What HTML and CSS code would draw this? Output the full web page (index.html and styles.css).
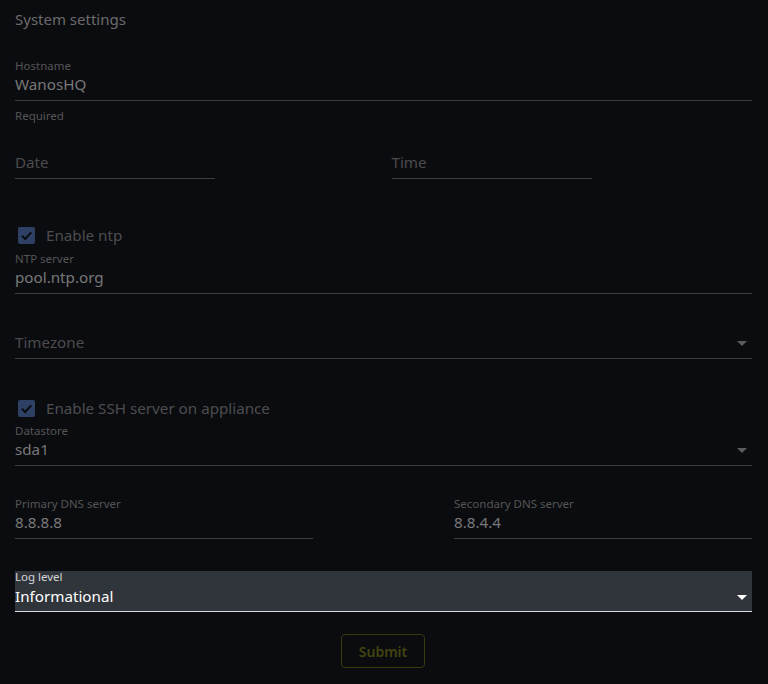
FILE: index.html
```html
<!DOCTYPE html>
<html lang="en">
<head>
<meta charset="utf-8">
<title>System settings</title>
<link rel="stylesheet" href="styles.css">
</head>
<body>
<main class="page">
  <h1 class="title">System settings</h1>

  <div class="field hostname">
    <span class="label">Hostname</span>
    <span class="value">WanosHQ</span>
  </div>
  <div class="helper">Required</div>

  <div class="row-half">
    <div class="field narrow">
      <span class="label"></span>
      <span class="value placeholder">Date</span>
    </div>
    <div class="field narrow">
      <span class="label"></span>
      <span class="value placeholder">Time</span>
    </div>
  </div>

  <label class="check check-ntp">
    <span class="box"><svg viewBox="0 0 17 17" width="17" height="17"><path d="M4 8.8 L7.2 12 L13.2 5.4" fill="none" stroke="#0b0c10" stroke-width="2"/></svg></span>
    <span class="check-text">Enable ntp</span>
  </label>

  <div class="field ntp">
    <span class="label">NTP server</span>
    <span class="value">pool.ntp.org</span>
  </div>

  <div class="field select timezone">
    <span class="label"></span>
    <span class="value placeholder">Timezone</span>
    <span class="arrow"></span>
  </div>

  <label class="check check-ssh">
    <span class="box"><svg viewBox="0 0 17 17" width="17" height="17"><path d="M4 8.8 L7.2 12 L13.2 5.4" fill="none" stroke="#0b0c10" stroke-width="2"/></svg></span>
    <span class="check-text">Enable SSH server on appliance</span>
  </label>

  <div class="field select datastore">
    <span class="label">Datastore</span>
    <span class="value">sda1</span>
    <span class="arrow"></span>
  </div>

  <div class="row-dns">
    <div class="field dns">
      <span class="label">Primary DNS server</span>
      <span class="value">8.8.8.8</span>
    </div>
    <div class="field dns">
      <span class="label">Secondary DNS server</span>
      <span class="value">8.8.4.4</span>
    </div>
  </div>

  <div class="field select filled">
    <span class="label">Log level</span>
    <span class="value">Informational</span>
    <span class="arrow"></span>
  </div>

  <div class="actions">
    <button class="submit" type="button">Submit</button>
  </div>
</main>
</body>
</html>
```

FILE: styles.css
```css
* { box-sizing: border-box; }
html, body {
  margin: 0;
  background: #0b0c10;
  height: 100%;
}
body {
  font-family: "Noto Sans", "Open Sans", sans-serif;
  color: #777;
}
.page {
  padding: 9px 16px 0 15px;
  display: flex;
  flex-direction: column;
}
.title {
  margin: 0;
  font-size: 15px;
  line-height: 20px;
  font-weight: 400;
  color: #6a6a6a;
}
.field {
  position: relative;
  display: flex;
  flex-direction: column;
  border-bottom: 1px solid #3c3d41;
}
.label {
  display: block;
  height: 15px;
  font-size: 11.5px;
  line-height: 15px;
  color: #555;
}
.value {
  display: block;
  font-size: 15.2px;
  line-height: 22px;
  padding-bottom: 5px;
  color: #787878;
}
.value.placeholder { color: #4b4b4d; }
.hostname { margin-top: 29px; }
.helper {
  margin-top: 8px;
  font-size: 11.5px;
  line-height: 14px;
  color: #555;
}
.row-half {
  margin-top: 13px;
  display: grid;
  grid-template-columns: 1fr 1fr;
  column-gap: 16px;
}
.narrow { width: 200px; }
.check {
  display: flex;
  align-items: center;
  height: 22px;
  padding-left: 3px;
  gap: 11px;
}
.check-ntp { margin-top: 45px; }
.check-ssh { margin-top: 38px; }
.box {
  width: 17px;
  height: 17px;
  border-radius: 2px;
  background: #2e4064;
  display: flex;
}
.check-text {
  font-size: 15.2px;
  line-height: 22px;
  color: #4d4d4f;
}
.ntp { margin-top: 5px; }
.timezone { margin-top: 22px; }
.datastore { margin-top: 4px; }
.arrow {
  position: absolute;
  right: 5px;
  top: 25px;
  width: 0;
  height: 0;
  border-left: 5px solid transparent;
  border-right: 5px solid transparent;
  border-top: 5px solid #5c5c5e;
}
.row-dns {
  margin-top: 30px;
  display: flex;
  justify-content: space-between;
}
.dns { width: 298px; }
.filled {
  margin-top: 32px;
  background: #30343b;
  border-bottom-color: #d8d8d8;
}
.filled .label {
  height: 12px;
  line-height: 12px;
  margin-bottom: 2px;
  color: #d6d6d6;
}
.filled .value {
  color: #ffffff;
  padding-bottom: 4px;
}
.filled .arrow {
  top: 24px;
  border-top-color: #ffffff;
}
.actions {
  margin-top: 22px;
  display: flex;
  justify-content: center;
  padding-right: 1px;
}
.submit {
  width: 84px;
  height: 34px;
  border: 1px solid #393a0e;
  border-radius: 4px;
  background: transparent;
  font-family: "Noto Sans", "Open Sans", sans-serif;
  font-size: 14px;
  font-weight: 600;
  color: #434410;
  padding: 0;
}
```
